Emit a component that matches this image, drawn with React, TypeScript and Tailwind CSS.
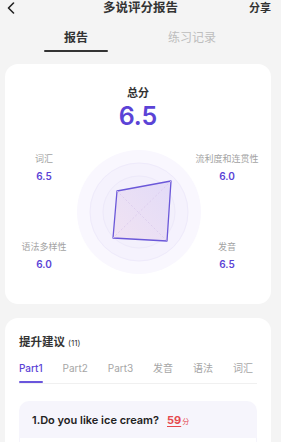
import React from "react";

const purple = "#5b43d6";

function Radar() {
  return (
    <svg width="124" height="124" viewBox="0 0 124 124" className="shrink-0">
      <defs>
        <linearGradient id="poly" x1="0" y1="1" x2="1" y2="0">
          <stop offset="0" stopColor="#f1e3f2" />
          <stop offset="1" stopColor="#e2dbf8" />
        </linearGradient>
      </defs>
      <circle cx="62" cy="62" r="62" fill="#f9f7fe" />
      <circle cx="62" cy="62" r="49" fill="#f5f2fd" stroke="#eeeafb" strokeWidth="1" />
      <circle cx="62" cy="62" r="36" fill="#f3f0fc" stroke="#ede9fa" strokeWidth="1" />
      <polygon points="40,41 94,31 90,91 36,88" fill="url(#poly)" stroke="#6b58d9" strokeWidth="1.3" strokeLinejoin="round" />
      <line x1="40" y1="41" x2="90" y2="91" stroke="#d9c9ec" strokeWidth="0.8" strokeDasharray="2 2" />
      <line x1="94" y1="31" x2="36" y2="88" stroke="#d9c9ec" strokeWidth="0.8" strokeDasharray="2 2" />
    </svg>
  );
}

function Stat({ label, value }: { label: string; value: string }) {
  return (
    <div className="flex flex-col items-center">
      <div className="whitespace-nowrap text-[9px] leading-[12px] text-[#a3a3a3]">{label}</div>
      <div className="mt-[5px] text-[10px] leading-[12px] font-semibold" style={{ color: purple }}>
        {value}
      </div>
    </div>
  );
}

export default function App() {
  const tabs = ["Part1", "Part2", "Part3", "发音", "语法", "词汇"];
  return (
    <div
      className="w-[281px] h-[442px] overflow-hidden bg-[#f4f4f4] text-[#222]"
      style={{ fontFamily: 'Inter, "Noto Sans CJK SC", sans-serif' }}
    >
      {/* header */}
      <div className="relative h-[16px] flex items-center justify-center">
        <svg className="absolute left-[7px] top-[2px]" width="8" height="12" viewBox="0 0 8 12">
          <path d="M6.5 1 L1.5 6 L6.5 11" fill="none" stroke="#222" strokeWidth="1.6" strokeLinecap="round" strokeLinejoin="round" />
        </svg>
        <div className="text-[12.5px] leading-[16px] font-bold text-[#333]">多说评分报告</div>
        <div className="absolute right-[10px] top-0 text-[11px] leading-[16px] font-bold text-[#333]">分享</div>
      </div>

      {/* tabs */}
      <div className="flex mt-[14px] h-[34px]">
        <div className="ml-[44px] w-[64px] flex flex-col items-center">
          <div className="text-[12px] leading-[16px] font-semibold text-[#333]">报告</div>
          <div className="mt-[4px] h-[2px] w-[64px] rounded-full bg-[#333]" />
        </div>
        <div className="ml-[60px] text-[12px] leading-[16px] text-[#bdbdbd]">练习记录</div>
      </div>

      {/* score card */}
      <div className="mx-[5px] w-[266px] rounded-[13px] bg-white pt-[21px] pb-[30px] flex flex-col items-center">
        <div className="text-[11px] leading-[16px] font-bold text-[#333]">总分</div>
        <div className="text-[25px] leading-[30px] font-semibold" style={{ color: purple }}>
          6.5
        </div>
        <div className="mt-[19px] flex w-full">
          <div className="w-[72px] shrink-0 pl-[6px] flex flex-col justify-between pt-[3px] pb-[4px]">
            <Stat label="词汇" value="6.5" />
            <Stat label="语法多样性" value="6.0" />
          </div>
          <Radar />
          <div className="flex-1 min-w-0 pr-[18px] flex flex-col justify-between pt-[3px] pb-[4px]">
            <Stat label="流利度和连贯性" value="6.0" />
            <Stat label="发音" value="6.5" />
          </div>
        </div>
      </div>

      {/* suggestion card */}
      <div className="mx-[5px] mt-[14px] w-[266px] rounded-t-[13px] bg-white px-[14px] pt-[16px] pb-[20px]">
        <div className="flex items-baseline">
          <span className="text-[11.5px] leading-[16px] font-bold text-[#333]">提升建议</span>
          <span className="ml-[3px] text-[8px] text-[#333]">(11)</span>
        </div>
        <div className="mt-[11px] flex justify-between border-b border-[#f0f0f0] pr-[4px]">
          {tabs.map((t, i) => (
            <div key={t} className="flex flex-col items-center">
              <div
                className={
                  "text-[10px] leading-[14px] " + (i === 0 ? "font-medium text-[#5b43d6]" : "text-[#a6a6a6]")
                }
              >
                {t}
              </div>
              <div className={"mt-[6px] h-[2px] w-full rounded-full " + (i === 0 ? "bg-[#6a55dc]" : "bg-transparent")} />
            </div>
          ))}
        </div>
        <div className="mt-[17px] rounded-[10px] bg-[#f6f5fc] pt-[11px]">
          <div className="px-[13px] flex items-baseline">
            <span className="text-[11px] leading-[15px] font-semibold text-[#222]">1.Do you like ice cream?</span>
            <span className="ml-[8px] text-[11px] font-bold text-[#e5484d] underline underline-offset-2">59</span>
            <span className="ml-[1px] text-[7px] text-[#e5484d]">分</span>
          </div>
          <div className="mt-[9px] mx-[1px] h-[30px] bg-white" />
        </div>
      </div>
    </div>
  );
}
